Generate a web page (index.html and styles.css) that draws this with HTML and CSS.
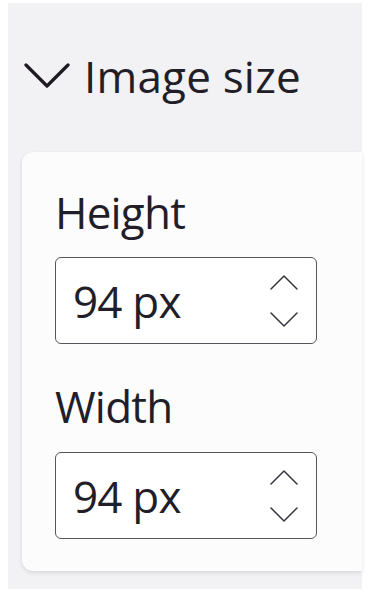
FILE: index.html
```html
<!DOCTYPE html>
<html lang="en">
<head>
<meta charset="utf-8">
<title>Image size</title>
<link rel="stylesheet" href="styles.css">
</head>
<body>
<div class="panel">
  <div class="header">
    <svg class="chev" width="46" height="26" viewBox="0 0 46 26"><path d="M2 2 L23 23 L44 2" fill="none" stroke="#1e1a22" stroke-width="3.2" stroke-linecap="round" stroke-linejoin="round"/></svg>
    <span class="title">Image size</span>
  </div>
  <div class="card">
    <div class="label">Height</div>
    <div class="field">
      <span class="value">94 px</span>
      <span class="spin">
        <svg width="28" height="15" viewBox="0 0 28 15"><path d="M1 14 L14 1 L27 14" fill="none" stroke="#3a3640" stroke-width="1.5" stroke-linecap="round" stroke-linejoin="round"/></svg>
        <svg width="28" height="15" viewBox="0 0 28 15"><path d="M1 1 L14 14 L27 1" fill="none" stroke="#3a3640" stroke-width="1.5" stroke-linecap="round" stroke-linejoin="round"/></svg>
      </span>
    </div>
    <div class="label second">Width</div>
    <div class="field">
      <span class="value">94 px</span>
      <span class="spin">
        <svg width="28" height="15" viewBox="0 0 28 15"><path d="M1 14 L14 1 L27 14" fill="none" stroke="#3a3640" stroke-width="1.5" stroke-linecap="round" stroke-linejoin="round"/></svg>
        <svg width="28" height="15" viewBox="0 0 28 15"><path d="M1 1 L14 14 L27 1" fill="none" stroke="#3a3640" stroke-width="1.5" stroke-linecap="round" stroke-linejoin="round"/></svg>
      </span>
    </div>
  </div>
</div>
</body>
</html>
```
FILE: styles.css
```css
html, body {
  margin: 0;
  padding: 0;
  background: #ffffff;
}
body {
  font-family: "Open Sans", "Noto Sans", sans-serif;
  color: #221e28;
  width: 382px;
  height: 602px;
  overflow: hidden;
}
.panel {
  margin: 3px 20px 0 8px;
  background: #f2f2f4;
  padding: 47px 0 18px 0;
}
.header {
  display: flex;
  align-items: center;
  height: 52px;
  padding-left: 16px;
}
.chev {
  display: block;
  margin-right: 14px;
}
.title {
  font-size: 44px;
  line-height: 52px;
  letter-spacing: 0.2px;
}
.card {
  margin: 50px 0 0 14px;
  background: #fcfcfd;
  border-radius: 11px 0 0 11px;
  box-shadow: 0 2px 4px rgba(0, 0, 0, 0.10), 0 0 1px rgba(0, 0, 0, 0.08);
  padding: 34px 0 32px 33px;
}
.label {
  font-size: 44px;
  line-height: 52px;
  letter-spacing: -0.8px;
  margin-bottom: 19px;
}
.label.second {
  margin-top: 36px;
  margin-bottom: 20px;
}
.field {
  width: 262px;
  height: 87px;
  box-sizing: border-box;
  border: 1.5px solid #58545c;
  border-radius: 6px;
  background: #ffffff;
  display: flex;
  align-items: center;
  justify-content: space-between;
  padding: 0 18px 0 17px;
}
.value {
  font-size: 44px;
  line-height: 52px;
  letter-spacing: -0.8px;
}
.spin {
  display: flex;
  flex-direction: column;
  gap: 22px;
}
.spin svg {
  display: block;
}
```
